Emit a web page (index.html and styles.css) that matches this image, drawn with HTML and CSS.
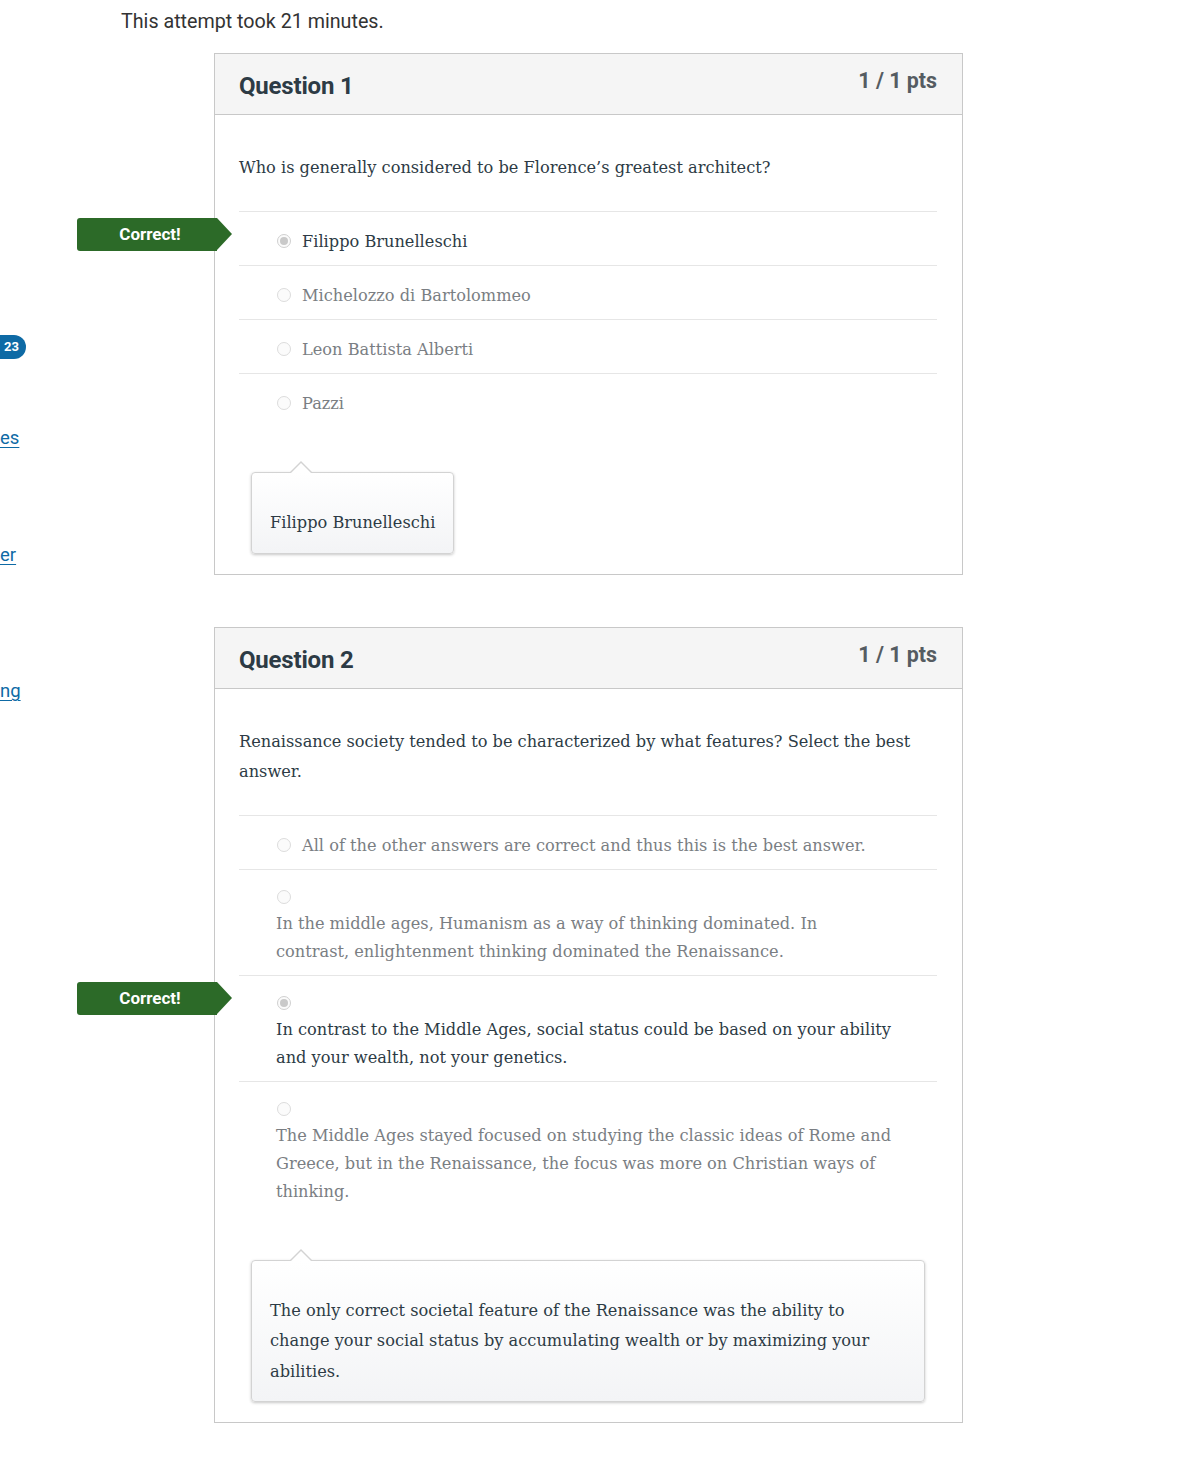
FILE: index.html
```html
<!DOCTYPE html>
<html lang="en">
<head>
<meta charset="utf-8">
<title>Quiz results</title>
<link rel="stylesheet" href="styles.css">
</head>
<body>
<div class="page">
  <nav class="sidebar">
    <div class="side-item side-badge-row"><span class="count-badge">23</span></div>
    <div class="side-item side-link l1"><a href="#">es</a></div>
    <div class="side-item side-link l2"><a href="#">er</a></div>
    <div class="side-item side-link l3"><a href="#">ng</a></div>
  </nav>
  <main class="main">
    <p class="attempt">This attempt took 21 minutes.</p>

    <section class="question q1">
      <header class="q-header">
        <h2 class="q-title">Question 1</h2>
        <span class="q-pts">1 / 1 pts</span>
      </header>
      <div class="q-body">
        <p class="q-text">Who is generally considered to be Florence’s greatest architect?</p>
        <ul class="answers">
          <li class="answer selected">
            <span class="correct-flag">Correct!</span>
            <span class="radio checked"></span><span class="a-text">Filippo Brunelleschi</span>
          </li>
          <li class="answer"><span class="radio"></span><span class="a-text">Michelozzo di Bartolommeo</span></li>
          <li class="answer"><span class="radio"></span><span class="a-text">Leon Battista Alberti</span></li>
          <li class="answer"><span class="radio"></span><span class="a-text">Pazzi</span></li>
        </ul>
        <div class="comment short">
          <p>Filippo Brunelleschi</p>
        </div>
      </div>
    </section>

    <section class="question q2">
      <header class="q-header">
        <h2 class="q-title">Question 2</h2>
        <span class="q-pts">1 / 1 pts</span>
      </header>
      <div class="q-body">
        <p class="q-text">Renaissance society tended to be characterized by what features? Select the best answer.</p>
        <ul class="answers">
          <li class="answer"><span class="radio"></span><span class="a-text">All of the other answers are correct and thus this is the best answer.</span></li>
          <li class="answer multi">
            <div class="radio-line"><span class="radio"></span></div>
            <div class="a-block">In the middle ages, Humanism as a way of thinking dominated. In contrast, enlightenment thinking dominated the Renaissance.</div>
          </li>
          <li class="answer multi selected">
            <span class="correct-flag">Correct!</span>
            <div class="radio-line"><span class="radio checked"></span></div>
            <div class="a-block">In contrast to the Middle Ages, social status could be based on your ability and your wealth, not your genetics.</div>
          </li>
          <li class="answer multi">
            <div class="radio-line"><span class="radio"></span></div>
            <div class="a-block">The Middle Ages stayed focused on studying the classic ideas of Rome and Greece, but in the Renaissance, the focus was more on Christian ways of thinking.</div>
          </li>
        </ul>
        <div class="comment long">
          <p>The only correct societal feature of the Renaissance was the ability to change your social status by accumulating wealth or by maximizing your abilities.</p>
        </div>
      </div>
    </section>
  </main>
</div>
</body>
</html>
```

FILE: styles.css
```css
* { box-sizing: border-box; }

html, body {
  margin: 0;
  padding: 0;
  background: #ffffff;
}

body {
  font-family: Roboto, "Liberation Sans", Arial, sans-serif;
  color: #333333;
  width: 1200px;
  min-height: 1458px;
}

.page {
  display: flex;
  align-items: flex-start;
}

/* ---------- left sidebar (only its right edge is visible) ---------- */
.sidebar {
  width: 26px;
  flex: 0 0 26px;
  padding-top: 335px;
  display: flex;
  flex-direction: column;
}

.side-item {
  display: flex;
  white-space: nowrap;
  font-family: Roboto, "Liberation Sans", sans-serif;
}

.count-badge {
  display: inline-block;
  width: 26px;
  height: 24px;
  border-radius: 0 12px 12px 0;
  background: #0e6aa5;
  color: #fff;
  font-weight: 700;
  font-size: 13px;
  line-height: 24px;
  text-align: center;
  padding-right: 3px;
}

.side-link { font-size: 18.5px; line-height: 24px; }
.side-link a {
  color: #0e6aa5;
  text-decoration: underline;
  text-underline-offset: 3px;
  text-decoration-thickness: 1px;
}
.side-link.l1 { margin-top: 67px; }
.side-link.l2 { margin-top: 93px; }
.side-link.l3 { margin-top: 112px; }

/* ---------- main ---------- */
.main {
  flex: 1 1 auto;
  padding-left: 95px;
  padding-top: 10px;
  padding-bottom: 36px;
}

.attempt {
  margin: 0;
  font-size: 19.7px;
  line-height: 24px;
  color: #333;
}

.question {
  width: 749px;
  margin-left: 93px;
  border: 1px solid #c8c8c8;
  background: #fff;
}

.q1 { margin-top: 19px; }
.q2 { margin-top: 52px; }

.q-header {
  display: flex;
  justify-content: space-between;
  align-items: flex-start;
  height: 61px;
  padding: 0 25px 0 24px;
  background: #f5f5f5;
  border-bottom: 1px solid #c8c8c8;
}

.q-title {
  margin: 0;
  padding-top: 18px;
  font-size: 24px;
  line-height: 28px;
  font-weight: 700;
  color: #2d3b45;
  letter-spacing: -0.2px;
}

.q-pts {
  padding-top: 15px;
  font-size: 21.4px;
  line-height: 24px;
  font-weight: 700;
  color: #555c62;
}

.q-body {
  padding: 38px 25px 20px 24px;
  font-family: "DejaVu Serif", "Liberation Serif", serif;
  font-size: 16.2px;
  color: #2d3b45;
}

.q-text {
  margin: 0 0 28px;
  line-height: 30px;
}

.answers {
  list-style: none;
  margin: 0;
  padding: 0;
}

.answer {
  position: relative;
  border-top: 1px solid #e6e6e6;
  padding: 16px 20px 9px 37px;
  line-height: 28px;
  color: #7a7e83;
}

.answer.selected { color: #2d3b45; }

.radio {
  display: inline-block;
  width: 14px;
  height: 14px;
  margin-left: 1px;
  margin-right: 11px;
  border-radius: 50%;
  border: 1px solid #dcdcdc;
  background: #fbfbfb;
  vertical-align: -1px;
  position: relative;
}

.radio.checked { border-color: #d0d0d0; }
.radio.checked::after {
  content: "";
  position: absolute;
  left: 2px;
  top: 2px;
  width: 8px;
  height: 8px;
  border-radius: 50%;
  background: #c9c9c9;
}

.radio-line {
  height: 24px;
  line-height: 24px;
  display: flex;
  align-items: center;
  margin-top: -1px;
}

.a-block {
  line-height: 28px;
  max-width: 617px;
  margin-top: 1px;
}

/* Correct! flag overlaying the left gutter */
.correct-flag {
  position: absolute;
  left: -162px;
  top: 6px;
  width: 140px;
  height: 33px;
  background: #2c6a28;
  border-radius: 3px 0 0 3px;
  color: #fff;
  font-family: Roboto, "Liberation Sans", sans-serif;
  font-weight: 700;
  font-size: 17px;
  line-height: 32px;
  text-align: center;
  padding-left: 6px;
}
.correct-flag::after {
  content: "";
  position: absolute;
  right: -15px;
  top: 0;
  border-left: 15px solid #2c6a28;
  border-top: 16.5px solid transparent;
  border-bottom: 16.5px solid transparent;
}

/* answer comment bubble */
.comment {
  position: relative;
  margin: 45px 12px 0 12px;
  padding: 35px 24px 14px 18px;
  border: 1px solid #d3d3d3;
  border-radius: 4px;
  background: linear-gradient(#ffffff, #f3f4f6);
  box-shadow: 0 1px 3px rgba(0, 0, 0, 0.22);
  color: #2d3b45;
}
.comment.short {
  display: inline-block;
  padding-right: 18px;
}
.comment p {
  margin: 0;
  line-height: 30.5px;
}
.comment::before {
  content: "";
  position: absolute;
  top: -12px;
  left: 38px;
  border-left: 11px solid transparent;
  border-right: 11px solid transparent;
  border-bottom: 11px solid #d3d3d3;
}
.comment::after {
  content: "";
  position: absolute;
  top: -10px;
  left: 39px;
  border-left: 10px solid transparent;
  border-right: 10px solid transparent;
  border-bottom: 10px solid #ffffff;
}
```
